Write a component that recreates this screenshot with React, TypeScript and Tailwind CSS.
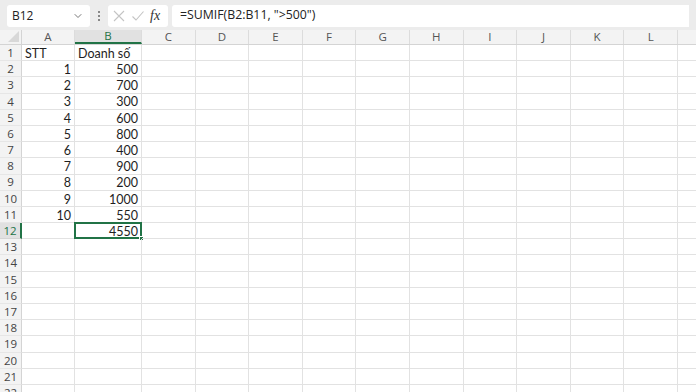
import { ChevronDown } from "lucide-react";

const cols = ["A", "B", "C", "D", "E", "F", "G", "H", "I", "J", "K", "L", "M"];
const widths: Record<string, string> = { A: "w-[53px]", B: "w-[67px]" };
const data: [string, string, string][] = [
  ["1", "STT", "Doanh số"],
  ["2", "1", "500"],
  ["3", "2", "700"],
  ["4", "3", "300"],
  ["5", "4", "600"],
  ["6", "5", "800"],
  ["7", "6", "400"],
  ["8", "7", "900"],
  ["9", "8", "200"],
  ["10", "9", "1000"],
  ["11", "10", "550"],
  ["12", "", "4550"],
];

function Cell({ col, value, row }: { col: string; value?: string; row: number }) {
  const w = widths[col] ?? "w-[53.6px]";
  const selected = col === "B" && row === 12;
  const alignRight = row > 1;
  return (
    <div
      className={`${w} shrink-0 h-full border-r border-b border-[#e2e2e2] relative px-[3px] pt-[3px] flex items-center leading-none text-[12.5px] text-[#1e1e1e] ${
        alignRight ? "justify-end" : "justify-start"
      }`}
    >
      {value}
      {selected && (
        <>
          <div className="absolute -left-[1px] -top-[1px] -right-[1px] -bottom-[1px] border-2 border-[#217346]" />
          <div className="absolute -right-[3px] -bottom-[3px] w-[5px] h-[5px] bg-[#217346] border border-white" />
        </>
      )}
    </div>
  );
}

export default function App() {
  const rows = Array.from({ length: 22 }, (_, i) => i + 1);
  return (
    <div className="w-[696px] h-[392px] overflow-hidden bg-white" style={{ fontFamily: "Lato, 'Noto Sans', sans-serif" }}>
      {/* formula bar */}
      <div className="h-[30px] bg-[#ececec] flex items-center gap-0 px-[7px] pt-[1px]">
        <div className="w-[83px] h-[22px] bg-white rounded-[3px] flex items-center justify-between pl-[5px] pr-[6px] text-[12px] text-[#222]" style={{ fontFamily: "'Open Sans', sans-serif" }}>
          <span>B12</span>
          <ChevronDown size={12} strokeWidth={1.6} className="text-[#555]" />
        </div>
        <div className="w-[18px] flex flex-col items-center gap-[2px]">
          <span className="w-[2px] h-[2px] rounded-full bg-[#666]" />
          <span className="w-[2px] h-[2px] rounded-full bg-[#666]" />
          <span className="w-[2px] h-[2px] rounded-full bg-[#666]" />
        </div>
        <div className="w-[60px] h-[22px] bg-white rounded-[3px] flex items-center gap-[5px] pl-[4px]">
          <svg width="14" height="14" viewBox="0 0 14 14" fill="none" stroke="#c4c4c4" strokeWidth="1.1">
            <path d="M2 2 L12 12 M12 2 L2 12" />
          </svg>
          <svg width="14" height="14" viewBox="0 0 14 14" fill="none" stroke="#c4c4c4" strokeWidth="1.1">
            <path d="M1.5 7.5 L5 11 L12.5 2.5" />
          </svg>
          <span className="text-[14px] italic text-[#333] leading-none" style={{ fontFamily: "'Liberation Serif', serif" }}>
            fx
          </span>
        </div>
        <div className="ml-[4px] flex-1 h-[22px] bg-white rounded-l-[3px] flex items-center pl-[8px] text-[12.3px] text-[#222]" style={{ fontFamily: "'Open Sans', sans-serif" }}>
          =SUMIF(B2:B11, "&gt;500")
        </div>
      </div>

      {/* column header */}
      <div className="h-[15px] flex bg-[#f3f3f3] border-b border-[#d4d4d4] text-[11.5px] text-[#555]" style={{ fontFamily: "'Open Sans', sans-serif" }}>
        <div className="w-[22px] shrink-0 h-full border-r border-[#d4d4d4] relative">
          <svg className="absolute right-[2px] bottom-[2px]" width="11" height="11" viewBox="0 0 11 11">
            <path d="M11 0 L11 11 L0 11 Z" fill="#d8d8d8" />
          </svg>
        </div>
        {cols.map((c) => (
          <div
            key={c}
            className={`${widths[c] ?? "w-[53.6px]"} shrink-0 h-full flex items-center justify-center border-r border-[#dcdcdc] leading-none ${
              c === "B" ? "text-[#217346] bg-[#e1e1e1] border-b-2 border-b-[#217346]" : ""
            }`}
          >
            {c === "M" ? "" : c}
          </div>
        ))}
      </div>

      {/* rows */}
      {rows.map((r) => {
        const d = data[r - 1];
        return (
          <div key={r} className="h-[16.2px] flex">
            <div
              className={`w-[22px] shrink-0 h-full flex items-center justify-center border-r border-b text-[11.5px] ${
                r === 12 ? "bg-[#e1e1e1] text-[#217346] border-r-2 border-r-[#217346] border-b-[#d4d4d4]" : "bg-[#f3f3f3] text-[#444] border-r-[#d4d4d4] border-b-[#e6e6e6]"
              }`}
              style={{ fontFamily: "'Open Sans', sans-serif" }}
            >
              {r}
            </div>
            {cols.map((c, i) => (
              <Cell key={c} col={c} row={r} value={d ? (i === 0 ? d[1] : i === 1 ? d[2] : undefined) : undefined} />
            ))}
          </div>
        );
      })}
    </div>
  );
}
